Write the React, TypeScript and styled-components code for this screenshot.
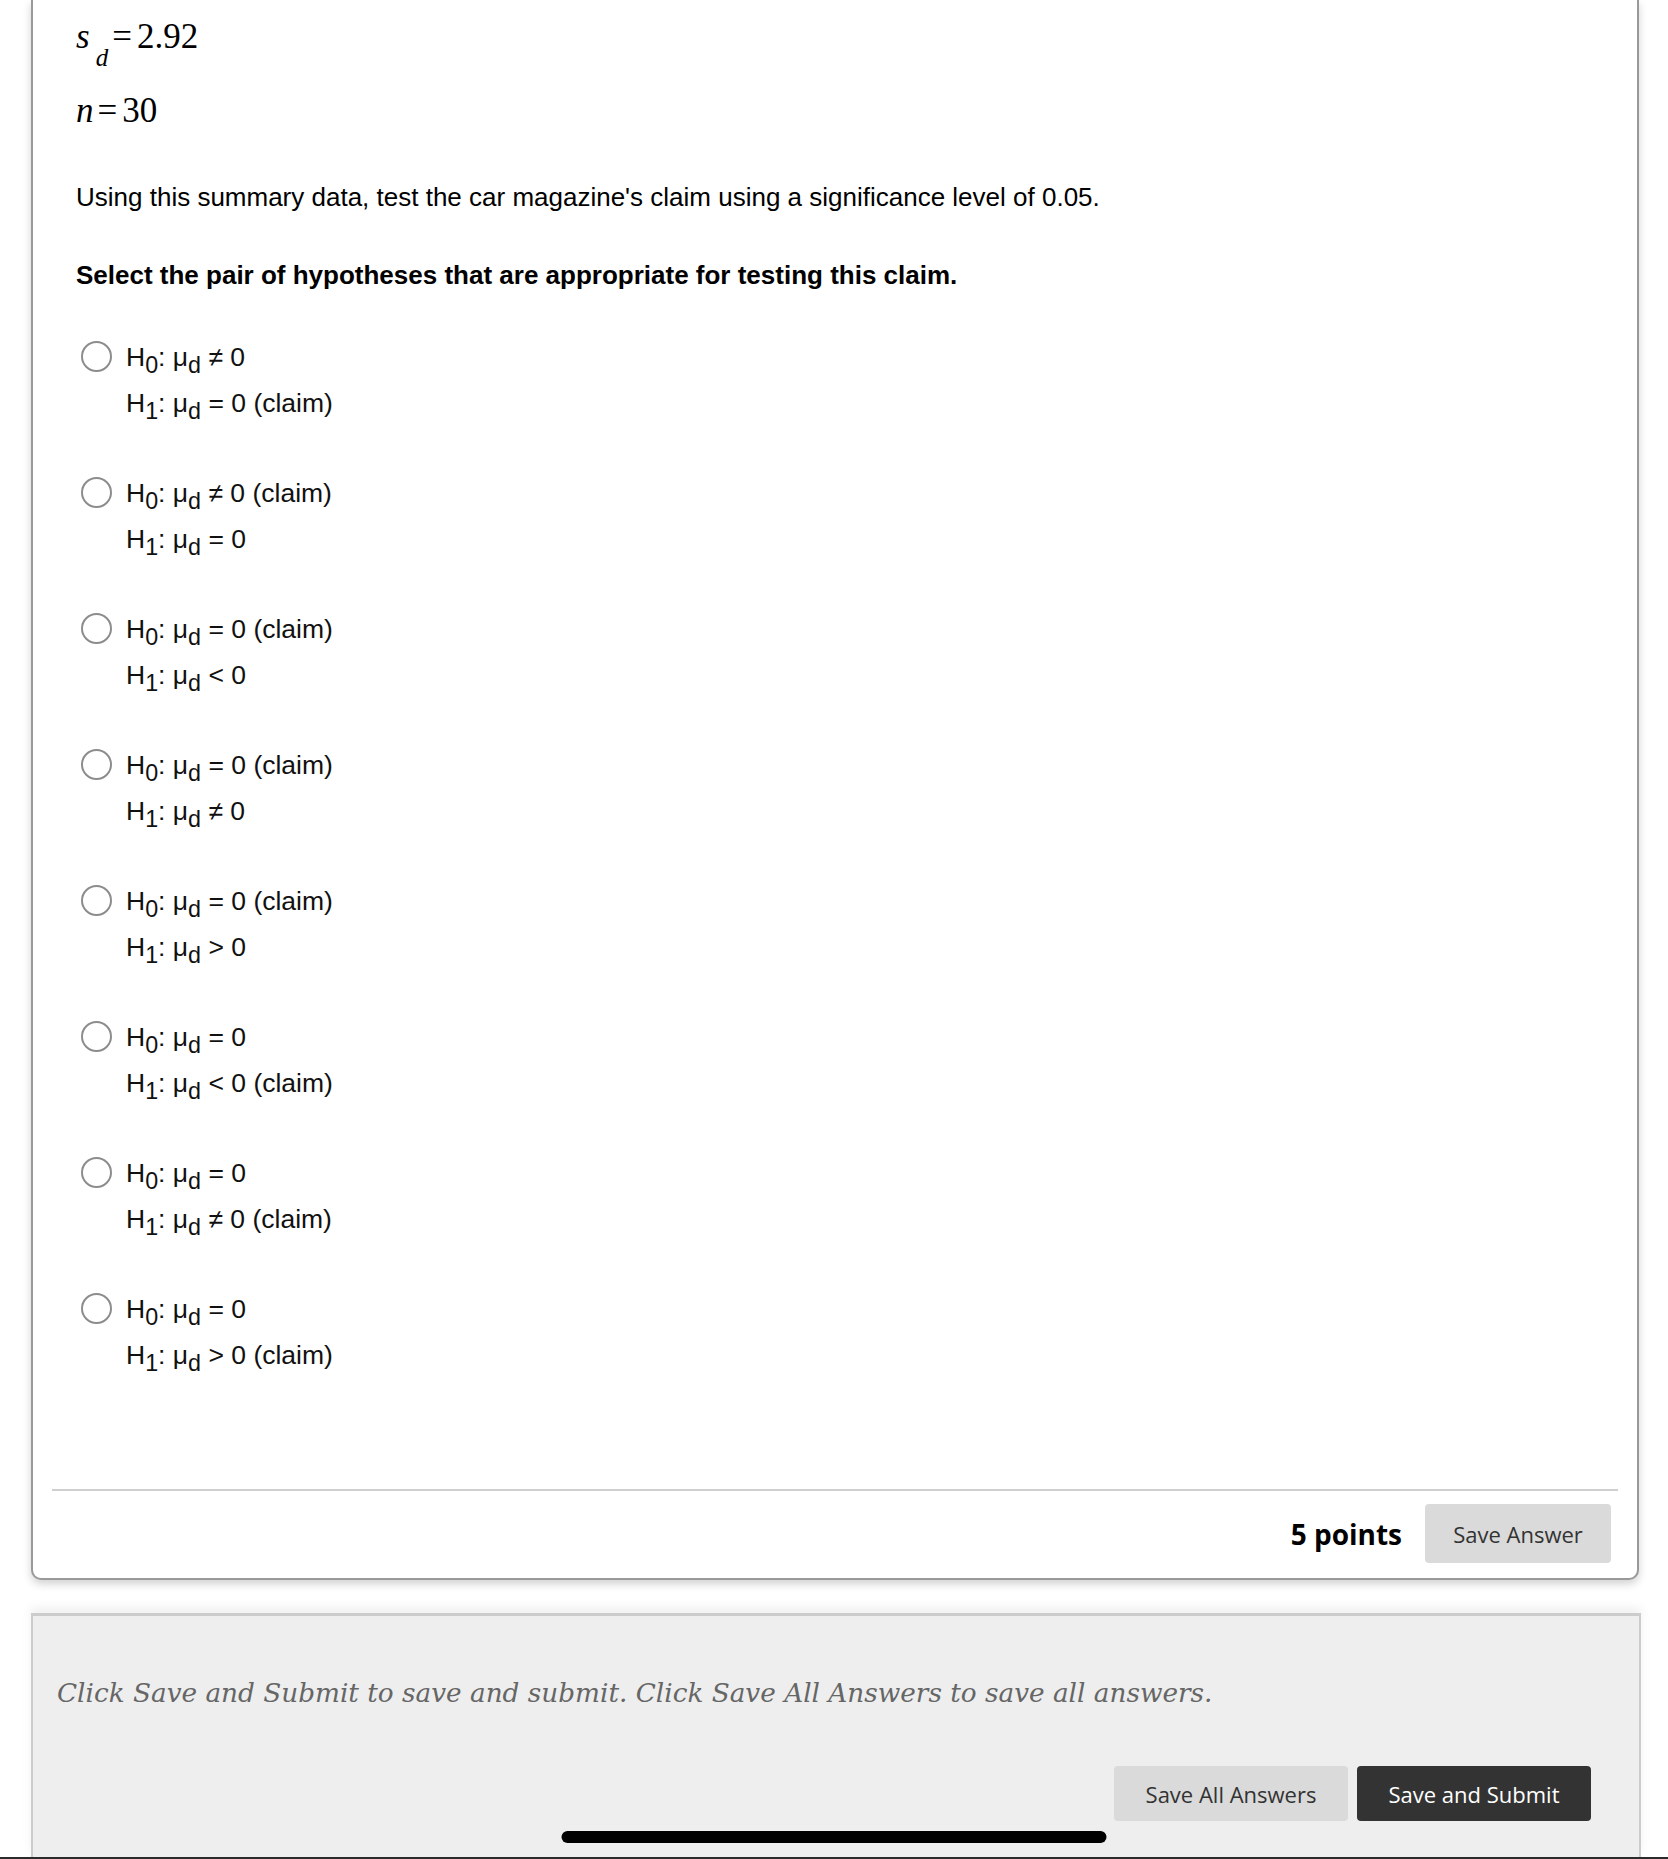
import { createGlobalStyle, styled } from "styled-components";

const GlobalStyle = createGlobalStyle`
  html, body {
    margin: 0;
    padding: 0;
    background-color: #fff;
  }
  body {
    font-family: "Liberation Sans", Arial, sans-serif;
    color: #000;
  }
`;

const Page = styled.div`
  box-sizing: border-box;
  display: flex;
  flex-direction: column;
  height: 1859px;
  overflow: hidden;
  padding: 0 27px 0 31px;
  border-bottom: 2px solid #2b2b2b;
`;

const Card = styled.section`
  background-color: #fff;
  border: 2px solid #999;
  border-top: 0;
  border-radius: 0 0 10px 10px;
  box-shadow: 0 4px 8px rgba(0, 0, 0, 0.18);
  margin-right: 2px;
  padding: 17px 0 15px;
`;

const Body = styled.div`
  padding: 0 43px;
`;

const MathLine = styled.div<{ $gap?: number }>`
  font-family: "Liberation Serif", "Times New Roman", serif;
  font-size: 35px;
  line-height: 40px;
  margin: 0 0 ${(p) => p.$gap ?? 0}px;
`;

const Var = styled.i`
  font-style: italic;
`;

const SubVar = styled.i`
  font-style: italic;
  font-size: 25px;
  line-height: 0;
  vertical-align: -18px;
  margin-left: 6px;
`;

const Eq = styled.span`
  margin: 0 5px 0 4px;
`;

const Para = styled.p<{ $bold?: boolean }>`
  font-size: 26px;
  line-height: 32px;
  font-weight: ${(p) => (p.$bold ? "bold" : "normal")};
  margin: 0;
`;

const Options = styled.div`
  display: flex;
  flex-direction: column;
  gap: 44px;
  margin: 43px 0 111px;
`;

const Option = styled.label`
  display: flex;
  align-items: flex-start;
  gap: 14px;
  padding-left: 5px;
  cursor: pointer;
`;

const Radio = styled.span`
  box-sizing: border-box;
  flex: none;
  width: 31px;
  height: 31px;
  margin-top: 7px;
  border: 2.5px solid #8c8c8c;
  border-radius: 50%;
  background-color: #fff;
`;

const Hyp = styled.div`
  font-size: 26.5px;
  line-height: 46px;
  color: #111;
`;

const Sub = styled.sub`
  font-size: 0.88em;
  line-height: 0;
  vertical-align: -0.28em;
`;

const Rule = styled.hr`
  border: 0;
  border-top: 2px solid #cfcfcf;
  margin: 0 19px 13px;
`;

const Footer = styled.div`
  display: flex;
  align-items: center;
  justify-content: flex-end;
  gap: 23px;
  padding: 0 26px 0 0;
`;

const Points = styled.span`
  font-family: "Open Sans", sans-serif;
  font-size: 28px;
  font-weight: bold;
`;

const Button = styled.button<{ $dark?: boolean; $wide?: boolean }>`
  flex: none;
  font-family: "Open Sans", sans-serif;
  font-size: 22px;
  border: 0;
  border-radius: 4px;
  cursor: pointer;
  padding: 0;
  height: ${(p) => (p.$wide ? 55 : 59)}px;
  width: ${(p) => (p.$wide ? 234 : 186)}px;
  background-color: ${(p) => (p.$dark ? "#333" : "#dadada")};
  color: ${(p) => (p.$dark ? "#fff" : "#333")};
`;

const Submit = styled.section`
  flex: 1;
  background-color: #eee;
  border: 2px solid #ccc;
  border-top: 3px solid #ccc;
  border-bottom: 0;
  box-shadow: 0 -6px 10px rgba(0, 0, 0, 0.06);
  margin-top: 33px;
  padding: 59px 48px 0 24px;
`;

const Note = styled.p`
  font-family: "DejaVu Serif", Georgia, serif;
  font-style: italic;
  font-size: 26.3px;
  line-height: 36px;
  color: #666;
  margin: 0 0 55px;
`;

const Actions = styled.div`
  display: flex;
  justify-content: flex-end;
  gap: 9px;
`;

const HomeBar = styled.div`
  position: fixed;
  left: 50%;
  bottom: 16px;
  transform: translateX(-50%);
  width: 545px;
  height: 12px;
  border-radius: 6px;
  background-color: #000;
`;

const options = [
  { h0: "≠ 0", h1: "= 0 (claim)" },
  { h0: "≠ 0 (claim)", h1: "= 0" },
  { h0: "= 0 (claim)", h1: "< 0" },
  { h0: "= 0 (claim)", h1: "≠ 0" },
  { h0: "= 0 (claim)", h1: "> 0" },
  { h0: "= 0", h1: "< 0 (claim)" },
  { h0: "= 0", h1: "≠ 0 (claim)" },
  { h0: "= 0", h1: "> 0 (claim)" },
];

export default function App() {
  return (
    <Page>
      <GlobalStyle />
      <Card>
        <Body>
          <MathLine $gap={33}>
            <Var>s</Var>
            <SubVar>d</SubVar>
            <Eq>=</Eq>2.92
          </MathLine>
          <MathLine $gap={50}>
            <Var>n</Var>
            <Eq>=</Eq>30
          </MathLine>
          <Para>Using this summary data, test the car magazine's claim using a significance level of 0.05.</Para>
          <Para $bold style={{ marginTop: 46 }}>
            Select the pair of hypotheses that are appropriate for testing this claim.
          </Para>
          <Options>
            {options.map((o, i) => (
              <Option key={i}>
                <Radio />
                <Hyp>
                  <div>
                    H<Sub>0</Sub>: μ<Sub>d</Sub> {o.h0}
                  </div>
                  <div>
                    H<Sub>1</Sub>: μ<Sub>d</Sub> {o.h1}
                  </div>
                </Hyp>
              </Option>
            ))}
          </Options>
        </Body>
        <Rule />
        <Footer>
          <Points>5 points</Points>
          <Button>Save Answer</Button>
        </Footer>
      </Card>
      <Submit>
        <Note>Click Save and Submit to save and submit. Click Save All Answers to save all answers.</Note>
        <Actions>
          <Button $wide>Save All Answers</Button>
          <Button $wide $dark>Save and Submit</Button>
        </Actions>
      </Submit>
      <HomeBar />
    </Page>
  );
}
